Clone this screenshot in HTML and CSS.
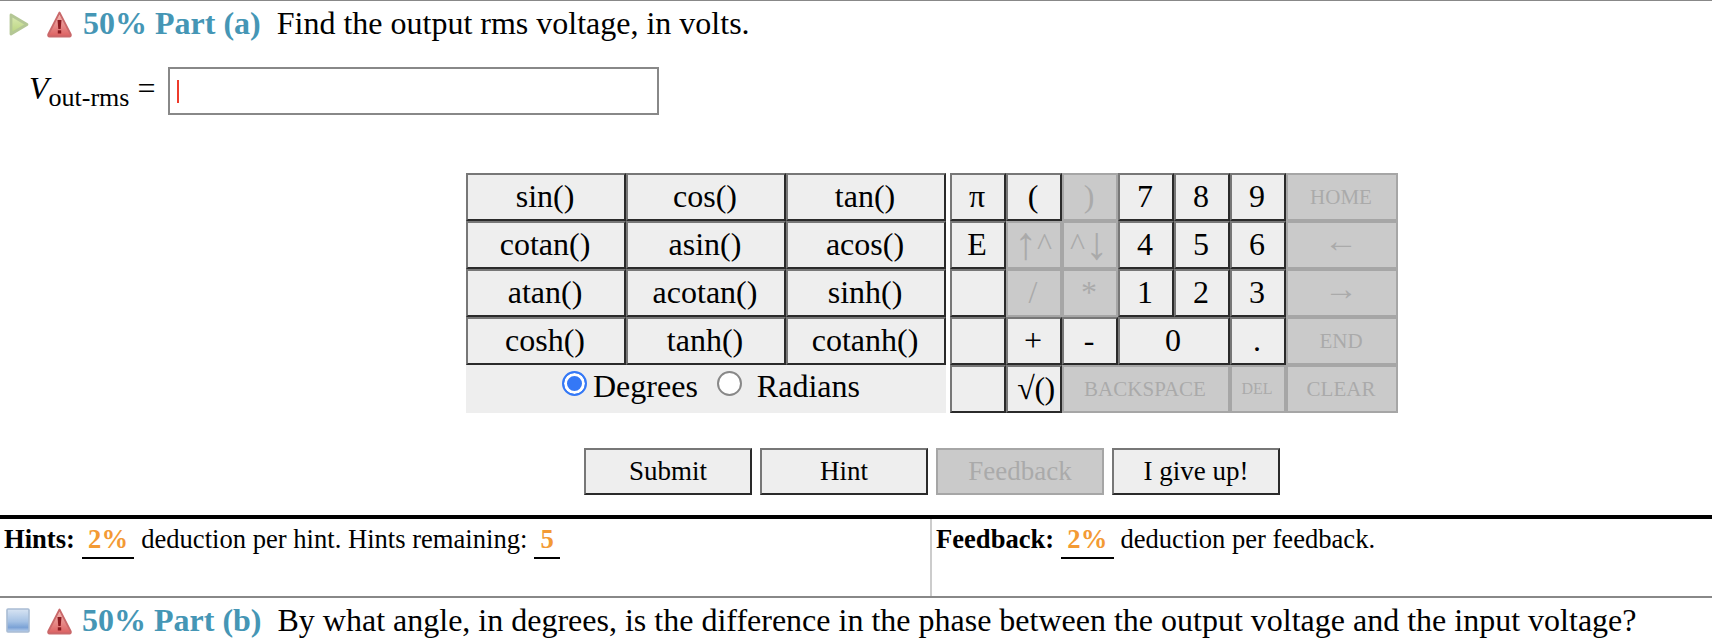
FILE: index.html
```html
<!DOCTYPE html>
<html lang="en">
<head>
<meta charset="utf-8">
<title>Part (a)</title>
<link rel="stylesheet" href="styles.css">
</head>
<body>
<svg class="defs" width="0" height="0" aria-hidden="true">
  <defs>
    <linearGradient id="warnFill" x1="0" y1="0" x2="0" y2="1">
      <stop offset="0" stop-color="#f4c0ba"/><stop offset="1" stop-color="#dc5f60"/>
    </linearGradient>
    <linearGradient id="playFill" x1="0" y1="0" x2="0" y2="1">
      <stop offset="0" stop-color="#dcebb4"/><stop offset="1" stop-color="#b7d37c"/>
    </linearGradient>
    <linearGradient id="boxFill" x1="0" y1="0" x2="0" y2="1">
      <stop offset="0" stop-color="#d8e4f3"/><stop offset=".55" stop-color="#a4c1e4"/><stop offset=".8" stop-color="#7ba2d6"/><stop offset="1" stop-color="#bcd1ec"/>
    </linearGradient>
    <symbol id="warn" viewBox="0 0 25 27">
      <path d="M12.5 1.5 L23.8 23.5 Q24.2 25.5 22.5 25.5 L2.5 25.5 Q.8 25.5 1.2 23.5 Z" fill="url(#warnFill)" stroke="#c9686a" stroke-width="1.8" stroke-linejoin="round"/>
      <path d="M10.5 9 H14.5 L13.7 18 H11.3 Z" fill="#8a1a20"/>
      <rect x="10.8" y="19.3" width="3.4" height="3.2" fill="#8a1a20"/>
    </symbol>
  </defs>
</svg>

<section class="part">
  <h2 class="part-head">
    <svg class="ic-play" viewBox="0 0 20 23" aria-hidden="true"><path d="M2 2 L18 11.5 L2 21 Z" fill="url(#playFill)" stroke="#b4c795" stroke-width="2.8" stroke-linejoin="round"/></svg>
    <svg class="ic-warn" aria-hidden="true"><use href="#warn"/></svg>
    <span class="part-label">50% Part (a)</span>
    <span class="part-q">Find the output rms voltage, in volts.</span>
  </h2>

  <div class="answer">
    <span class="var"><i>V</i><sub>out-rms</sub><span class="eq">=</span></span>
    <div class="field"><span class="caret"></span></div>
  </div>

  <div class="center">
    <div class="keypad">
      <div class="fn-grid">
        <button class="key">sin()</button><button class="key">cos()</button><button class="key">tan()</button>
        <button class="key">cotan()</button><button class="key">asin()</button><button class="key">acos()</button>
        <button class="key">atan()</button><button class="key">acotan()</button><button class="key">sinh()</button>
        <button class="key">cosh()</button><button class="key">tanh()</button><button class="key">cotanh()</button>
        <div class="modes">
          <span class="radio on"></span><span class="mode-a">Degrees</span>
          <span class="radio gap"></span><span class="mode-b">Radians</span>
        </div>
      </div>
      <div class="num-grid">
        <button class="key">π</button><button class="key">(</button><button class="key off">)</button><button class="key">7</button><button class="key">8</button><button class="key">9</button><button class="key off small">HOME</button>
        <button class="key">E</button><button class="key off"><span class="tall">↑</span>^</button><button class="key off">^<span class="tall">↓</span></button><button class="key">4</button><button class="key">5</button><button class="key">6</button><button class="key off small wide-arrow">←</button>
        <button class="key"></button><button class="key off">/</button><button class="key off">*</button><button class="key">1</button><button class="key">2</button><button class="key">3</button><button class="key off small wide-arrow">→</button>
        <button class="key"></button><button class="key">+</button><button class="key">-</button><button class="key span2">0</button><button class="key">.</button><button class="key off small">END</button>
        <button class="key"></button><button class="key root">√()</button><button class="key off small span3">BACKSPACE</button><button class="key off tiny">DEL</button><button class="key off small">CLEAR</button>
      </div>
    </div>
    <div class="actions">
      <button class="key act">Submit</button>
      <button class="key act">Hint</button>
      <button class="key act off">Feedback</button>
      <button class="key act">I give up!</button>
    </div>
  </div>

  <div class="notes">
    <div class="note"><b>Hints:</b> <span class="blank">2%</span> deduction per hint. Hints remaining: <span class="blank">5</span></div>
    <div class="note second"><b>Feedback:</b> <span class="blank">2%</span> deduction per feedback.</div>
  </div>
</section>

<h2 class="part-head next">
  <svg class="ic-box" viewBox="0 0 24 25" aria-hidden="true"><rect x="1" y="1" width="22" height="23" rx="1" fill="url(#boxFill)" stroke="#a9bcd4" stroke-width="1.6"/></svg>
  <svg class="ic-warn" aria-hidden="true"><use href="#warn"/></svg>
  <span class="part-label">50% Part (b)</span>
  <span class="part-q">By what angle, in degrees, is the difference in the phase between the output voltage and the input voltage?</span>
</h2>
</body>
</html>
```

FILE: styles.css
```css
* { box-sizing: border-box; }
html, body { margin: 0; height: 638px; overflow: hidden; background: #fff; }
body { font-family: "Liberation Serif", "Times New Roman", serif; color: #000; }
.defs { position: absolute; }

.part { border-top: 1px solid #888; }

.part-head { display: flex; align-items: center; margin: 0; height: 47px; padding-bottom: 2px; font-size: 32px; font-weight: 400; white-space: nowrap; }
.ic-play { width: 20px; height: 23px; margin: 2px 0 0 9px; filter: blur(.5px); }
.ic-warn { width: 25px; height: 27px; margin: 2px 0 0 18px; filter: blur(.4px); }
.part-label { margin-left: 11px; font-weight: 700; color: #4596b5; }
.part-q { margin-left: 16px; }

.answer { display: flex; align-items: center; height: 48px; margin-top: 19px; padding-left: 29px; }
.var { width: 139px; padding-bottom: 6px; font-size: 32px; white-space: nowrap; }
.var sub { font-size: 26px; line-height: 0; }
.eq { margin-left: 8px; }
.field { width: 491px; height: 48px; border: 2px solid #888; padding: 11px 0 0 7px; }
.caret { display: block; width: 2px; height: 23px; background: #ee3b2b; }

.center { display: flex; flex-direction: column; align-items: center; padding-left: 152px; margin-top: 58px; }
.keypad { display: flex; gap: 4px; }
.fn-grid { display: grid; grid-template-columns: repeat(3, 160px); grid-auto-rows: 48px; }
.num-grid { display: grid; grid-template-columns: repeat(6, 56px) 112px; grid-auto-rows: 48px; }

.key { margin: 0; padding: 0 2px 2px 0; font-family: inherit; font-size: 32px; color: #000; background: #eee;
  border: 2px solid; border-color: #777 #2a2a2a #2a2a2a #777; border-radius: 0; white-space: nowrap; }
.key.off { background: #cacaca; color: #aaa; border-color: #a6a6a6; }
.key.small { font-size: 21px; padding-bottom: 0; }
.key.wide-arrow { padding-bottom: 8px; font-size: 34px; line-height: 1; }
.key.tiny { font-size: 16px; padding-bottom: 0; }
.span2 { grid-column: span 2; }
.span3 { grid-column: span 3; }
.tall { font-size: 46px; line-height: 30px; vertical-align: -4px; }
.root { padding-left: 6px; letter-spacing: -.5px; }

.modes { grid-column: span 3; display: flex; align-items: center; background: #eee; padding: 0 0 6px 96px; font-size: 32px; }
.radio { width: 25px; height: 25px; margin-bottom: 6px; border-radius: 50%; border: 2px solid #888; background: #fff; flex: none; }
.radio.on { border-color: #3478f6; background: #3478f6; box-shadow: inset 0 0 0 3px #fff; }
.radio.gap { margin-left: 19px; }
.mode-a { margin-left: 6px; }
.mode-b { margin-left: 15px; }

.actions { display: flex; gap: 8px; margin-top: 35px; }
.act { width: 168px; height: 47px; font-size: 27px; padding: 0 0 1px; }

.notes { display: flex; height: 83px; margin-top: 20px; border-top: 4px solid #000; border-bottom: 2px solid #888; }
.note { flex: 0 0 930px; padding: 2px 0 0 4px; font-size: 26.6px; white-space: nowrap; }
.note.second { flex: 1; border-left: 2px solid #ccc; padding-left: 4px; }
.blank { display: inline-block; min-width: 26px; padding: 0 6.5px; border-bottom: 2px solid #000; color: #f39a34; font-weight: 700; text-align: center; line-height: 36px; }

.next { height: 40px; padding: 5px 0 0; }
.next .part-label { margin-left: 10px; }
.ic-box { width: 24px; height: 25px; margin-left: 6px; filter: blur(.4px); }
.next .ic-warn { margin-left: 17px; }
```
